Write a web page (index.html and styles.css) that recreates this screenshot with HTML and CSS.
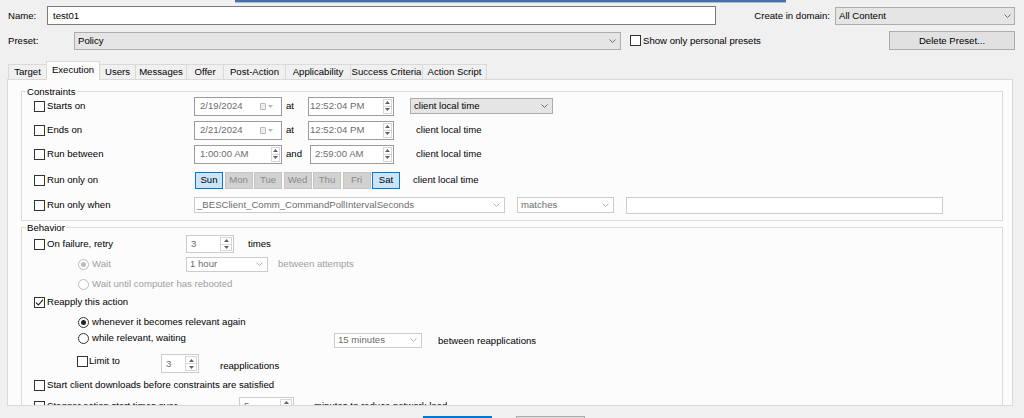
FILE: index.html
```html
<!DOCTYPE html>
<html lang="en">
<head>
<meta charset="utf-8">
<title>Take Action - Execution</title>
<link rel="stylesheet" href="styles.css">
</head>
<body>
<div class="titlebar"></div>

<div class="toprow">
  <span class="lbl lbl-name">Name:</span>
  <div class="textbox name-box">test01</div>
  <span class="lbl lbl-domain">Create in domain:</span>
  <div class="combo combo-domain"><span>All Content</span><svg class="chev" width="7" height="4" viewBox="0 0 7 4"><path d="M0.5 0.5L3.5 3.5L6.5 0.5"/></svg></div>
</div>

<div class="presetrow">
  <span class="lbl lbl-preset">Preset:</span>
  <div class="combo combo-preset"><span>Policy</span><svg class="chev" width="7" height="4" viewBox="0 0 7 4"><path d="M0.5 0.5L3.5 3.5L6.5 0.5"/></svg></div>
  <span class="cb cb-personal"></span>
  <span class="cb-text">Show only personal presets</span>
  <div class="btn btn-delete">Delete Preset...</div>
</div>

<div class="tabs">
  <div class="tab tab-target">Target</div>
  <div class="tab tab-exec active">Execution</div>
  <div class="tab tab-users">Users</div>
  <div class="tab tab-msg">Messages</div>
  <div class="tab tab-offer">Offer</div>
  <div class="tab tab-post">Post-Action</div>
  <div class="tab tab-appl">Applicability</div>
  <div class="tab tab-succ">Success Criteria</div>
  <div class="tab tab-script">Action Script</div>
</div>

<div class="panel">
  <fieldset class="group group-constraints">
    <legend>Constraints</legend>

    <div class="row c1">
      <div class="opt"><span class="cb"></span><span>Starts on</span></div>
      <div class="field date"><span class="val">2/19/2024</span><span class="cal"></span><svg class="caldd" width="5" height="3" viewBox="0 0 5 3"><path d="M0 0H5L2.5 3Z"/></svg></div>
      <span class="conj">at</span>
      <div class="field time"><span class="val">12:52:04 PM</span><span class="spin"><span><svg width="5" height="3" viewBox="0 0 5 3"><path d="M0 3H5L2.5 0Z"/></svg></span><span><svg width="5" height="3" viewBox="0 0 5 3"><path d="M0 0H5L2.5 3Z"/></svg></span></span></div>
      <div class="combo combo-tz"><span>client local time</span><svg class="chev" width="7" height="4" viewBox="0 0 7 4"><path d="M0.5 0.5L3.5 3.5L6.5 0.5"/></svg></div>
    </div>

    <div class="row c2">
      <div class="opt"><span class="cb"></span><span>Ends on</span></div>
      <div class="field date"><span class="val">2/21/2024</span><span class="cal"></span><svg class="caldd" width="5" height="3" viewBox="0 0 5 3"><path d="M0 0H5L2.5 3Z"/></svg></div>
      <span class="conj">at</span>
      <div class="field time"><span class="val">12:52:04 PM</span><span class="spin"><span><svg width="5" height="3" viewBox="0 0 5 3"><path d="M0 3H5L2.5 0Z"/></svg></span><span><svg width="5" height="3" viewBox="0 0 5 3"><path d="M0 0H5L2.5 3Z"/></svg></span></span></div>
      <span class="tz">client local time</span>
    </div>

    <div class="row c3">
      <div class="opt"><span class="cb"></span><span>Run between</span></div>
      <div class="field time time-a"><span class="val">1:00:00 AM</span><span class="spin"><span><svg width="5" height="3" viewBox="0 0 5 3"><path d="M0 3H5L2.5 0Z"/></svg></span><span><svg width="5" height="3" viewBox="0 0 5 3"><path d="M0 0H5L2.5 3Z"/></svg></span></span></div>
      <span class="conj conj-and">and</span>
      <div class="field time time-b"><span class="val">2:59:00 AM</span><span class="spin"><span><svg width="5" height="3" viewBox="0 0 5 3"><path d="M0 3H5L2.5 0Z"/></svg></span><span><svg width="5" height="3" viewBox="0 0 5 3"><path d="M0 0H5L2.5 3Z"/></svg></span></span></div>
      <span class="tz">client local time</span>
    </div>

    <div class="row c4">
      <div class="opt"><span class="cb"></span><span>Run only on</span></div>
      <div class="days">
        <span class="day on">Sun</span>
        <span class="day">Mon</span>
        <span class="day">Tue</span>
        <span class="day">Wed</span>
        <span class="day">Thu</span>
        <span class="day">Fri</span>
        <span class="day on">Sat</span>
      </div>
      <span class="tz tz-days">client local time</span>
    </div>

    <div class="row c5">
      <div class="opt"><span class="cb"></span><span>Run only when</span></div>
      <div class="combo dis combo-rel"><span>_BESClient_Comm_CommandPollIntervalSeconds</span><svg class="chev" width="7" height="4" viewBox="0 0 7 4"><path d="M0.5 0.5L3.5 3.5L6.5 0.5"/></svg></div>
      <div class="combo dis combo-match"><span>matches</span><svg class="chev" width="7" height="4" viewBox="0 0 7 4"><path d="M0.5 0.5L3.5 3.5L6.5 0.5"/></svg></div>
      <div class="tbox"></div>
    </div>
  </fieldset>

  <fieldset class="group group-behavior">
    <legend>Behavior</legend>

    <div class="row b1">
      <div class="opt opt-retry"><span class="cb"></span><span>On failure, retry</span></div>
      <div class="spinbox sb-retry"><span class="val">3</span><span class="spin"><span><svg width="5" height="3" viewBox="0 0 5 3"><path d="M0 3H5L2.5 0Z"/></svg></span><span><svg width="5" height="3" viewBox="0 0 5 3"><path d="M0 0H5L2.5 3Z"/></svg></span></span></div>
      <span class="times">times</span>
    </div>

    <div class="row b2">
      <div class="ropt ropt-wait dim"><span class="rb dis sel"></span><span>Wait</span></div>
      <div class="combo dis combo-hour"><span>1 hour</span><svg class="chev" width="7" height="4" viewBox="0 0 7 4"><path d="M0.5 0.5L3.5 3.5L6.5 0.5"/></svg></div>
      <span class="dim attempts">between attempts</span>
    </div>

    <div class="row b3">
      <div class="ropt dim"><span class="rb dis"></span><span>Wait until computer has rebooted</span></div>
    </div>

    <div class="row b4">
      <div class="opt"><span class="cb"><svg width="9" height="9" viewBox="0 0 9 9"><path class="tick" d="M1 4.6L3.4 7L8 1.6"/></svg></span><span>Reapply this action</span></div>
    </div>

    <div class="row b5">
      <div class="ropt"><span class="rb sel"></span><span>whenever it becomes relevant again</span></div>
    </div>

    <div class="row b6">
      <div class="ropt ropt-while"><span class="rb"></span><span>while relevant, waiting</span></div>
      <div class="combo dis combo-min"><span>15 minutes</span><svg class="chev" width="7" height="4" viewBox="0 0 7 4"><path d="M0.5 0.5L3.5 3.5L6.5 0.5"/></svg></div>
      <span class="between-reapps">between reapplications</span>
    </div>

    <div class="row b7">
      <div class="opt opt-limit"><span class="cb"></span><span>Limit to</span></div>
      <div class="spinbox sb-limit"><span class="val">3</span><span class="spin"><span><svg width="5" height="3" viewBox="0 0 5 3"><path d="M0 3H5L2.5 0Z"/></svg></span><span><svg width="5" height="3" viewBox="0 0 5 3"><path d="M0 0H5L2.5 3Z"/></svg></span></span></div>
      <span class="reapps">reapplications</span>
    </div>

    <div class="row b8">
      <div class="opt"><span class="cb"></span><span>Start client downloads before constraints are satisfied</span></div>
    </div>

    <div class="row b9">
      <div class="opt opt-stagger"><span class="cb"></span><span>Stagger action start times over</span></div>
      <div class="spinbox sb-stagger"><span class="val">5</span><span class="spin"><span><svg width="5" height="3" viewBox="0 0 5 3"><path d="M0 3H5L2.5 0Z"/></svg></span><span><svg width="5" height="3" viewBox="0 0 5 3"><path d="M0 0H5L2.5 3Z"/></svg></span></span></div>
      <span class="stagger-tail">minutes to reduce network load</span>
    </div>
  </fieldset>
</div>

<div class="buttons">
  <div class="btn btn-ok">OK</div>
  <div class="btn btn-cancel">Cancel</div>
</div>
</body>
</html>
```

FILE: styles.css
```css
* { box-sizing: border-box; }
html, body { margin: 0; padding: 0; }
body {
  width: 1024px;
  height: 418px;
  overflow: hidden;
  background: #f0f0f0;
  color: #000;
  font-family: "Liberation Sans", Arial, sans-serif;
  font-size: 9.6px;
  line-height: 12px;
}
svg { display: block; flex: none; }

.titlebar {
  width: 551px;
  height: 2px;
  margin-left: 235px;
  background: #4371b0;
  box-shadow: 0 1px 0 #a9b9d0;
}

/* top rows */
.toprow, .presetrow {
  display: flex;
  align-items: center;
  height: 19px;
  padding-right: 9px;
}
.toprow { margin-top: 4px; }
.presetrow { margin-top: 6px; }
.lbl { flex: none; white-space: nowrap; }
.lbl-name { width: 47px; padding-left: 8px; }
.lbl-preset { width: 74px; padding-left: 8px; }
.lbl-domain { margin-left: auto; margin-right: 5px; }

.textbox {
  display: flex;
  align-items: center;
  flex: none;
  height: 19px;
  background: #fff;
  border: 1px solid #7a7a7a;
  padding-left: 5px;
}
.name-box { width: 669px; }

.combo {
  display: flex;
  align-items: center;
  justify-content: space-between;
  flex: none;
  border: 1px solid #adadad;
  background: #e5e5e5;
  padding: 0 4px 0 3px;
  white-space: nowrap;
}
.combo-domain { width: 180px; height: 18px; padding-right: 3px; }
.combo-preset { width: 547px; height: 18px; align-self: flex-end; }
.chev path { fill: none; stroke: #6a6a6a; stroke-width: 1; }
.combo.dis { background: #fff; border-color: #cccccc; color: #6d6d6d; }
.combo.dis .chev path { stroke: #b4b4b4; }

.cb {
  display: flex;
  align-items: center;
  justify-content: center;
  flex: none;
  width: 11px;
  height: 11px;
  border: 1px solid #333;
  background: #fff;
}
.tick { fill: none; stroke: #1a1a1a; stroke-width: 1.1; }
.cb-personal { margin-left: 9px; }
.cb-text { margin-left: 2px; white-space: nowrap; }

.btn {
  display: flex;
  align-items: center;
  justify-content: center;
  flex: none;
  background: #e1e1e1;
  border: 1px solid #adadad;
}
.btn-delete { margin-left: auto; width: 126px; height: 19px; }

/* tabs */
.tabs {
  display: flex;
  align-items: flex-end;
  height: 18px;
  margin-top: 11px;
  padding-left: 8px;
}
.tab {
  display: flex;
  align-items: center;
  justify-content: center;
  flex: none;
  height: 15px;
  margin-left: -1px;
  border: 1px solid #d9d9d9;
  border-bottom: 0;
  background: #f0f0f0;
  white-space: nowrap;
}
.tab:first-child { margin-left: 0; }
.tab.active {
  height: 19px;
  margin-bottom: -1px;
  padding-bottom: 3px;
  background: #fcfcfd;
  z-index: 1;
}
.tab-target { width: 39px; }
.tab-exec { width: 54px; }
.tab-users { width: 37px; }
.tab-msg { width: 52px; }
.tab-offer { width: 38px; }
.tab-post { width: 63px; }
.tab-appl { width: 66px; }
.tab-succ { width: 73px; }
.tab-script { width: 65px; }

/* panel */
.panel {
  width: 1006px;
  height: 327px;
  margin-left: 7px;
  border: 1px solid #d9d9d9;
  background: #fcfcfd;
  overflow: hidden;
  padding: 8px 9px 0 13px;
}
.group {
  margin: 0;
  min-width: 0;
  padding: 0 0 7px 12px;
  border: 1px solid #dcdcdc;
}
.group legend {
  padding: 0 1px;
  margin-left: -8px;
  line-height: 7px;
}
.group-behavior { margin-top: 3px; }

.row {
  display: flex;
  align-items: center;
  height: 16px;
  white-space: nowrap;
}
.opt { display: flex; align-items: center; flex: none; width: 160px; }
.opt .cb { margin-right: 2px; }

.c1 { margin-top: 3px; }
.c2 { margin-top: 8px; }
.c3 { margin-top: 8px; }
.c4 { margin-top: 10px; }
.c5 { margin-top: 9px; }

.field {
  display: flex;
  align-items: center;
  flex: none;
  height: 19px;
  background: #fff;
  border: 1px solid #9c9c9c;
  color: #6d6d6d;
}
.field .val, .spinbox .val { flex: 1; }
.date { width: 88px; padding-left: 5px; }
.cal {
  flex: none;
  width: 6px;
  height: 7px;
  border: 1px solid #b8b8b8;
  border-radius: 1px;
  background: #efefef;
}
.caldd { margin: 0 8px 0 2px; }
.caldd path { fill: #b8b8b8; }
.time { width: 86px; padding-left: 1px; }
.time-a { width: 88px; padding-left: 5px; }
.time-b { width: 84px; padding-left: 4px; }

.spin {
  display: flex;
  flex-direction: column;
  flex: none;
  align-self: stretch;
  width: 9px;
  margin: 1px;
  border: 1px solid #d6d6d6;
  background: #fff;
}
.spin > span { flex: 1; display: flex; align-items: center; justify-content: center; }
.spin > span + span { border-top: 1px solid #d6d6d6; }
.spin path { fill: #606060; }

.conj { flex: none; width: 26px; padding-left: 4px; }
.conj-and { width: 28px; }
.combo-tz { width: 143px; height: 16px; margin-left: 16px; }
.tz { margin-left: 22px; }
.tz-days { margin-left: 13px; }

.days { display: flex; gap: 1.5px; margin-left: 1px; }
.day {
  display: flex;
  align-items: center;
  justify-content: center;
  width: 28px;
  height: 17px;
  background: #d2d2d2;
  border: 1px solid #c4c4c4;
  color: #8a8a8a;
}
.day.on { background: #cce4f7; border-color: #0078d7; color: #000; }

.combo-rel { width: 311px; height: 16px; padding-left: 2px; }
.combo-match { width: 97px; height: 16px; margin-left: 12px; }
.tbox { flex: none; width: 317px; height: 17px; margin-left: 12px; background: #fff; border: 1px solid #cccccc; }

/* behavior */
.b1 { margin-top: 5px; }
.b2 { margin-top: 4px; }
.b3 { margin-top: 4px; }
.b4 { margin-top: 2px; }
.b5 { margin-top: 4px; }
.b6 { margin-top: 0; }
.b7 { margin-top: 7px; }
.b8 { margin-top: 8px; }
.b9 { margin-top: 5px; }

.spinbox {
  display: flex;
  align-items: center;
  flex: none;
  height: 18px;
  background: #fff;
  border: 1px solid #cccccc;
  color: #6d6d6d;
  padding-left: 4px;
}
.spinbox .spin { width: 12px; }
.opt-retry { width: 152px; }
.sb-retry { width: 48px; }
.times { margin-left: 14px; }

.rb {
  display: flex;
  align-items: center;
  justify-content: center;
  flex: none;
  width: 11px;
  height: 11px;
  border: 1px solid #333;
  border-radius: 50%;
  background: #fff;
}
.rb.sel::after {
  content: "";
  width: 5px;
  height: 5px;
  border-radius: 50%;
  background: #222;
}
.rb.dis { border-color: #bcbcbc; }
.rb.dis.sel::after { background: #bcbcbc; }
.ropt { display: flex; align-items: center; flex: none; margin-left: 44px; }
.ropt .rb { margin-right: 3px; }
.dim { color: #a0a0a0; }
.ropt-wait { width: 108px; }
.combo-hour { width: 82px; height: 15px; }
.attempts { margin-left: 10px; }
.ropt-while { width: 256px; }
.combo-min { width: 88px; height: 15px; margin-top: 4px; }
.between-reapps { margin-left: 16px; margin-top: 6px; }
.opt-limit { width: 84px; margin-left: 43px; }
.opt-limit .cb { margin-right: 1px; }
.sb-limit { width: 38px; height: 19px; margin-top: 5px; }
.reapps { margin-left: 21px; margin-top: 10px; }
.opt-stagger { width: 205px; }
.sb-stagger { width: 55px; }
.stagger-tail { margin-left: 20px; }

/* dialog buttons */
.buttons {
  display: flex;
  gap: 24px;
  margin-top: 10px;
  margin-left: 423px;
}
.btn-ok { width: 69px; height: 23px; border-color: #0078d7; box-shadow: inset 0 0 0 1px #0078d7; }
.btn-cancel { width: 69px; height: 23px; }
```
